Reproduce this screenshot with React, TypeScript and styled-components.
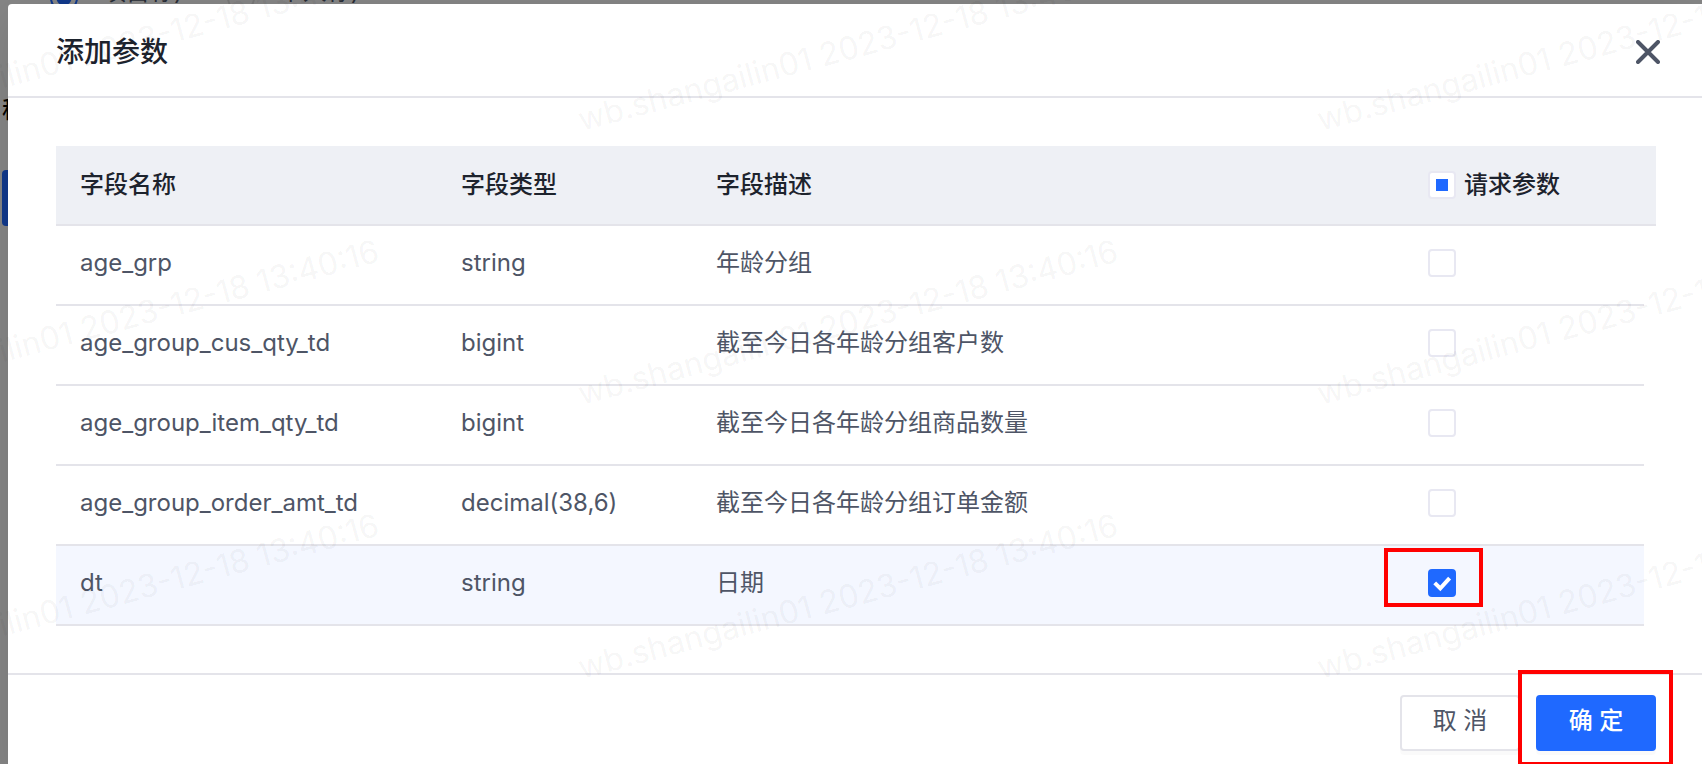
import React, { useEffect, useRef, useState } from "react";
import styled, { createGlobalStyle } from "styled-components";

const color = {
  primary: "#1f69ff",
  heading: "#1d232d",
  text: "#4e5566",
  line: "#e4e4ea",
  box: "#e8e8f2",
  headBg: "#eef0f5",
  selected: "#f4f7ff",
  mark: "#ff0000",
};

const GlobalStyle = createGlobalStyle`
  * { box-sizing: border-box; }
  body {
    margin: 0;
    font-family: Inter, "Noto Sans CJK SC", sans-serif;
    font-size: 24px;
    line-height: 32px;
    color: ${color.text};
  }
  button, input { font: inherit; margin: 0; }
`;

const Screen = styled.div`
  position: relative;
  height: 100vh;
  overflow: hidden;
  background: #f5f5f5;
`;

const Backdrop = styled.div`
  position: absolute;
  inset: 0;
  overflow: hidden;
`;

const ScopeOptions = styled.div`
  display: flex;
  gap: 44px;
  height: 80px;
  margin-top: -24px;
  padding-left: 50px;
`;

const ScopeOption = styled.label`
  display: flex;
  align-items: center;
  gap: 24px;
  height: 32px;
  white-space: nowrap;
`;

const Radio = styled.input`
  appearance: none;
  width: 28px;
  height: 28px;
  border: 2px solid #d9d9d9;
  border-radius: 50%;
  position: relative;
  top: 6px;

  &:checked {
    border-color: ${color.primary};
    background: radial-gradient(circle, ${color.primary} 7px, transparent 8px);
  }
`;

const BackdropHeading = styled.div`
  width: 8px;
  height: 84px;
  margin-top: 38px;
  overflow: hidden;
  color: #000;
  font-weight: 500;
  text-indent: 2px;
`;

const BackdropButton = styled.button`
  display: block;
  width: 120px;
  height: 56px;
  margin: -8px 0 0 2px;
  border: 0;
  border-radius: 4px;
  background: ${color.primary};
`;

const Shade = styled.div`
  position: absolute;
  inset: 0;
  background: rgba(0, 0, 0, 0.45);
`;

const Dialog = styled.section`
  position: relative;
  margin: 0 0 0 8px;
  top: 4px;
  background: #fff;
  border-radius: 4px 0 0 0;
  box-shadow: 0 12px 48px rgba(0, 0, 0, 0.12);
`;

const DialogHeader = styled.header`
  display: flex;
  align-items: center;
  justify-content: space-between;
  height: 94px;
  padding: 4px 42px 0 48px;
  border-bottom: 2px solid ${color.line};
`;

const Title = styled.h2`
  margin: 0;
  font-size: 28px;
  line-height: 40px;
  font-weight: 500;
  color: ${color.heading};
`;

const CloseButton = styled.button`
  display: flex;
  padding: 0;
  border: 0;
  background: none;
  color: ${color.text};
`;

const DialogBody = styled.div`
  padding: 48px 46px 47px 48px;
`;

const DialogFooter = styled.footer`
  display: flex;
  justify-content: flex-end;
  gap: 16px;
  padding: 20px 46px 20px 48px;
  border-top: 2px solid ${color.line};
`;

const FieldTable = styled.table`
  width: 100%;
  table-layout: fixed;
  border-collapse: separate;
  border-spacing: 0;
  text-align: left;
`;

const Column = styled.col<{ $width?: number }>`
  width: ${(p) => (p.$width ? `${p.$width}px` : "auto")};
`;

const HeadCell = styled.th`
  height: 80px;
  padding: 0 0 0 24px;
  background: ${color.headBg};
  border-bottom: 2px solid ${color.line};
  color: ${color.heading};
  font-weight: 500;
`;

const Gutter = styled.td`
  padding: 0;
  background: ${color.headBg};
  border-bottom: 2px solid ${color.line};
`;

const Cell = styled.td<{ $selected: boolean }>`
  height: 80px;
  padding: 0 0 4px 24px;
  border-bottom: 2px solid ${color.line};
  background: ${(p) => (p.$selected ? color.selected : "transparent")};
`;

const CheckLabel = styled.label`
  display: flex;
  align-items: center;
  gap: 8px;
`;

const CheckFrame = styled.span`
  position: relative;
  display: flex;
  width: 28px;
  height: 28px;
`;

const CheckInput = styled.input`
  appearance: none;
  width: 28px;
  height: 28px;
  border: 2px solid ${color.box};
  border-radius: 4px;
  background: #fff;

  &:checked {
    border-color: ${color.primary};
    background: ${color.primary};
  }

  &:indeterminate {
    background: linear-gradient(${color.primary}, ${color.primary}) center / 12px 12px no-repeat #fff;
  }
`;

const Tick = styled.svg`
  position: absolute;
  inset: 0;
  pointer-events: none;
`;

const Button = styled.button<{ $primary?: boolean }>`
  width: 120px;
  height: 56px;
  padding: 0 0 4px;
  border: 2px solid ${(p) => (p.$primary ? color.primary : color.line)};
  border-radius: 4px;
  background: ${(p) => (p.$primary ? color.primary : "#fff")};
  color: ${(p) => (p.$primary ? "#fff" : color.text)};
  font-weight: ${(p) => (p.$primary ? 500 : 400)};
  box-shadow: 0 4px 0 rgba(0, 0, 0, 0.02);
`;

const Marked = styled.div`
  position: relative;
  width: fit-content;
`;

const MarkBox = styled.span<{ $inset: string }>`
  position: absolute;
  inset: ${(p) => p.$inset};
  border: 4px solid ${color.mark};
  pointer-events: none;
`;

const WatermarkLayer = styled.div`
  position: absolute;
  inset: 0;
  overflow: hidden;
  pointer-events: none;
`;

const WatermarkGrid = styled.div`
  display: grid;
  grid-template-columns: repeat(3, 739px);
  grid-auto-rows: 274px;
  align-items: end;
  margin: -134px 0 0 -155px;
`;

const WatermarkText = styled.span`
  font-size: 32px;
  line-height: 40px;
  white-space: nowrap;
  color: rgba(0, 0, 0, 0.05);
  transform: rotate(-15deg);
  transform-origin: left bottom;
`;

interface Field {
  name: string;
  type: string;
  description: string;
}

const fields: Field[] = [
  { name: "age_grp", type: "string", description: "年龄分组" },
  { name: "age_group_cus_qty_td", type: "bigint", description: "截至今日各年龄分组客户数" },
  { name: "age_group_item_qty_td", type: "bigint", description: "截至今日各年龄分组商品数量" },
  { name: "age_group_order_amt_td", type: "decimal(38,6)", description: "截至今日各年龄分组订单金额" },
  { name: "dt", type: "string", description: "日期" },
];

interface CheckboxProps {
  checked: boolean;
  indeterminate?: boolean;
  label: string;
  showLabel?: boolean;
  onChange: () => void;
}

function Checkbox({ checked, indeterminate = false, label, showLabel, onChange }: CheckboxProps) {
  const input = useRef<HTMLInputElement>(null);
  useEffect(() => {
    if (input.current) input.current.indeterminate = indeterminate;
  }, [indeterminate]);
  return (
    <CheckLabel>
      <CheckFrame>
        <CheckInput
          ref={input}
          type="checkbox"
          aria-label={label}
          checked={checked}
          onChange={onChange}
        />
        {checked && (
          <Tick width="28" height="28" viewBox="0 0 28 28" fill="none" aria-hidden="true">
            <path d="M6.7 13.8 12.3 19.4 21.6 9.2" stroke="#fff" strokeWidth="4" />
          </Tick>
        )}
      </CheckFrame>
      {showLabel && label}
    </CheckLabel>
  );
}

export default function App() {
  const [selected, setSelected] = useState<string[]>(["dt"]);
  const all = selected.length === fields.length;
  const toggle = (name: string) =>
    setSelected((s) => (s.includes(name) ? s.filter((n) => n !== name) : [...s, name]));

  return (
    <Screen>
      <GlobalStyle />
      <Backdrop aria-hidden="true">
        <ScopeOptions>
          <ScopeOption>
            <Radio type="radio" name="scope" defaultChecked tabIndex={-1} />
            项目标)
          </ScopeOption>
          <ScopeOption>
            <Radio type="radio" name="scope" tabIndex={-1} />
            个人标)
          </ScopeOption>
        </ScopeOptions>
        <BackdropHeading>称</BackdropHeading>
        <BackdropButton type="button" tabIndex={-1} />
      </Backdrop>
      <Shade />

      <Dialog role="dialog" aria-labelledby="dialog-title">
        <DialogHeader>
          <Title id="dialog-title">添加参数</Title>
          <CloseButton type="button" aria-label="关闭">
            <svg width="24" height="24" viewBox="0 0 24 24" fill="none" aria-hidden="true">
              <path
                d="M2 2 22 22M22 2 2 22"
                stroke="currentColor"
                strokeWidth="4"
                strokeLinecap="round"
              />
            </svg>
          </CloseButton>
        </DialogHeader>

        <DialogBody>
          <FieldTable>
            <colgroup>
              <Column $width={381} />
              <Column $width={255} />
              <Column />
              <Column $width={240} />
              <Column $width={12} />
            </colgroup>
            <thead>
              <tr>
                <HeadCell scope="col">字段名称</HeadCell>
                <HeadCell scope="col">字段类型</HeadCell>
                <HeadCell scope="col">字段描述</HeadCell>
                <HeadCell scope="col">
                  <Checkbox
                    label="请求参数"
                    showLabel
                    checked={all}
                    indeterminate={selected.length > 0 && !all}
                    onChange={() => setSelected(all ? [] : fields.map((f) => f.name))}
                  />
                </HeadCell>
                <Gutter />
              </tr>
            </thead>
            <tbody>
              {fields.map((field) => {
                const on = selected.includes(field.name);
                const box = (
                  <Checkbox label={field.name} checked={on} onChange={() => toggle(field.name)} />
                );
                return (
                  <tr key={field.name}>
                    <Cell $selected={on}>{field.name}</Cell>
                    <Cell $selected={on}>{field.type}</Cell>
                    <Cell $selected={on}>{field.description}</Cell>
                    <Cell $selected={on}>
                      {field.name === "dt" ? (
                        <Marked>
                          {box}
                          <MarkBox $inset="-21px -27px -10px -44px" />
                        </Marked>
                      ) : (
                        box
                      )}
                    </Cell>
                  </tr>
                );
              })}
            </tbody>
          </FieldTable>
        </DialogBody>

        <DialogFooter>
          <Button type="button">取 消</Button>
          <Marked>
            <Button type="button" $primary>
              确 定
            </Button>
            <MarkBox $inset="-25px -17px -15px -18px" />
          </Marked>
        </DialogFooter>
      </Dialog>

      <WatermarkLayer aria-hidden="true">
        <WatermarkGrid>
          {Array.from({ length: 9 }, (_, i) => (
            <WatermarkText key={i}>wb.shangailin01 2023-12-18 13:40:16</WatermarkText>
          ))}
        </WatermarkGrid>
      </WatermarkLayer>
    </Screen>
  );
}
